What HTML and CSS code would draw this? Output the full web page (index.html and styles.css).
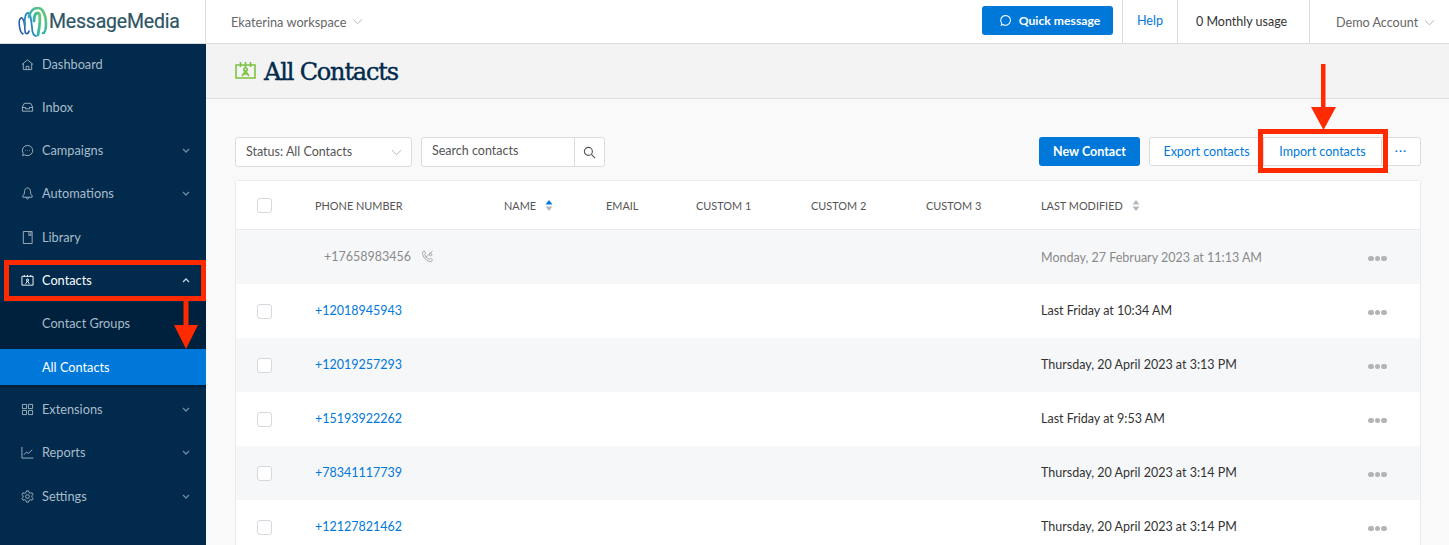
FILE: index.html
```html
<!DOCTYPE html>
<html lang="en">
<head>
<meta charset="utf-8">
<title>All Contacts</title>
<link rel="stylesheet" href="styles.css">
</head>
<body>
<div class="app">
  <aside class="side">
    <div class="logo">
      <svg class="logo-mark" viewBox="0 0 30 30" width="30" height="30" fill="none" stroke-linecap="round">
        <defs>
          <linearGradient id="arch" x1="1" y1="0" x2="0" y2="1">
            <stop offset="0" stop-color="#6cc86e"/>
            <stop offset=".55" stop-color="#37b8a6"/>
            <stop offset="1" stop-color="#2fa6cf"/>
          </linearGradient>
        </defs>
        <path d="M5 27C1 25 0 12 3 11c3-1 4 9 4 13 0 3 3 4 4 0" stroke="#2a5fa8" stroke-width="1.600"/>
        <path d="M7 18C6 10 8 6 10 6c3 0 3 8 4 14 0 6 2 9 4 9" stroke="#2b87c4" stroke-width="1.800"/>
        <path d="M11 10C12 4 16 1 20 1c5 0 8 8 8 15 0 6-1 10-3 10" stroke="url(#arch)" stroke-width="2.600"/>
        <path d="M16 14c0-6 2-8 4-8 3 0 2 12 0 22" stroke="url(#arch)" stroke-width="2.800"/>
      </svg>
      <span class="logo-text">MessageMedia</span>
    </div>
    <nav class="nav">
      <a class="item"><svg class="ic" viewBox="0 0 14 14"><path d="M1 7l6-5 6 5M2.500 6v6.500h9V6M5.500 12.500V9h3v3.500"/></svg><span>Dashboard</span></a>
      <a class="item"><svg class="ic" viewBox="0 0 14 14"><path d="M3.500 2.500h7l2 4v4.500h-11V6.500zM1.500 7h3.500v1.500h4V7h3.500"/></svg><span>Inbox</span></a>
      <a class="item"><svg class="ic" viewBox="0 0 14 14"><path d="M7 1.500a5.700 5.500 0 1 1-3 10.200L1.800 12.500l.6-2.400A5.600 5.500 0 0 1 7 1.500z"/><path d="M4.500 7h.6M6.700 7h.6M8.900 7h.6"/></svg><span>Campaigns</span><svg class="chev" viewBox="0 0 8 5"><path d="M1 1l3 3 3-3"/></svg></a>
      <a class="item"><svg class="ic" viewBox="0 0 14 14"><path d="M7 1c-2.200 0-3.200 2-3.200 4.200 0 2-.8 3.300-1.800 4.300v1.500h10V9.500c-1-1-1.800-2.300-1.800-4.300C10.200 3 9.200 1 7 1zM5.500 11c0 2.500 3 2.500 3 0"/></svg><span>Automations</span><svg class="chev" viewBox="0 0 8 5"><path d="M1 1l3 3 3-3"/></svg></a>
      <a class="item step"><svg class="ic" viewBox="0 0 14 14"><path d="M2.500 .5h9.500v13H2.500zM8.500 .5v4.500l1.200-.8 1 .8V.5"/></svg><span>Library</span></a>
      <a class="item active"><svg class="ic" viewBox="0 0 14 14"><path d="M1 2.500h12v9.500H1z"/><path d="M3.500 1v2M7 1v2M10.500 1v2"/><circle cx="7" cy="6.500" r="1.200"/><path d="M5 10.500L7 7.500l2 3"/></svg><span>Contacts</span><svg class="chev" viewBox="0 0 8 5"><path d="M1 4l3-3 3 3"/></svg></a>
      <div class="subs">
        <a class="sub">Contact Groups</a>
        <a class="sub current">All Contacts</a>
      </div>
      <a class="item"><svg class="ic" viewBox="0 0 14 14"><path d="M1.500 1.500h4.500v4.500H1.500zM8 1.500h4.500v4.500H8zM1.500 8h4.500v4.500H1.500zM8 8h4.500v4.500H8z"/></svg><span>Extensions</span><svg class="chev" viewBox="0 0 8 5"><path d="M1 1l3 3 3-3"/></svg></a>
      <a class="item"><svg class="ic" viewBox="0 0 14 14"><path d="M1 1v12h12.500M3 9.500l3-3 2 1.500 4-4"/></svg><span>Reports</span><svg class="chev" viewBox="0 0 8 5"><path d="M1 1l3 3 3-3"/></svg></a>
      <a class="item step"><svg class="ic" viewBox="0 0 14 14"><path d="M5.800 1h2.400l.4 1.800 1.500.8 1.800-.6 1.100 2-1.300 1.300v1.400l1.300 1.300-1.100 2-1.800-.6-1.500.8-.4 1.800H5.800l-.4-1.800-1.500-.8-1.800.6-1.100-2 1.300-1.300V6.300L1 5l1.100-2 1.800.6 1.500-.8z"/><circle cx="7" cy="7" r="2"/></svg><span>Settings</span><svg class="chev" viewBox="0 0 8 5"><path d="M1 1l3 3 3-3"/></svg></a>
    </nav>
  </aside>
  <div class="main">
    <header class="top">
      <div class="workspace">Ekaterina workspace<svg class="caret" viewBox="0 0 12 7"><path d="M1 1l5 5 5-5"/></svg></div>
      <button class="btn primary quick"><svg class="bubble" viewBox="0 0 14 14"><path d="M7 1.500a5.500 5.300 0 1 1-3 9.800l-1.500.7.400-2A5.400 5.300 0 0 1 7 1.500z"/></svg>Quick message</button>
      <a class="cell help">Help</a>
      <div class="cell usage">0 Monthly usage</div>
      <div class="cell account">Demo Account<svg class="caret" viewBox="0 0 12 7"><path d="M1 1l5 5 5-5"/></svg></div>
    </header>
    <div class="title-bar">
      <svg class="title-ic" viewBox="0 0 21 17" width="21" height="17"><path d="M1 3h19v13H1z"/><path d="M5.500 0v5M10.500 0v5M15.500 0v5"/><circle cx="10.500" cy="7.500" r="1.700"/><path d="M7 14L10.500 9.200 14 14M8.500 12h4"/></svg>
      <h1>All Contacts</h1>
    </div>
    <section class="content">
      <div class="toolbar">
        <div class="select"><span class="up-1">Status: All Contacts</span><svg class="caret" viewBox="0 0 12 7"><path d="M1 1l5 5 5-5"/></svg></div>
        <div class="search"><span class="search-text">Search contacts</span><span class="search-btn"><svg viewBox="0 0 14 14" width="13" height="13"><circle cx="5.800" cy="5.800" r="4.300"/><path d="M9 9l4 4"/></svg></span></div>
        <div class="spacer"></div>
        <button class="btn primary new">New Contact</button>
        <div class="group">
          <button class="g export">Export contacts</button>
          <button class="g import">Import contacts</button>
          <button class="g more">···</button>
        </div>
      </div>
      <div class="table">
        <div class="row head">
          <span class="check"></span>
          <span>PHONE NUMBER</span>
          <span>NAME<svg class="sort" viewBox="0 0 8 11"><path class="up" d="M4 0l3.500 4.500h-7z"/><path d="M4 11L.5 6.500h7z"/></svg></span>
          <span>EMAIL</span>
          <span>CUSTOM 1</span>
          <span>CUSTOM 2</span>
          <span>CUSTOM 3</span>
          <span>LAST MODIFIED<svg class="sort" viewBox="0 0 8 11"><path d="M4 0l3.500 4.500h-7z"/><path d="M4 11L.5 6.500h7z"/></svg></span>
          <span></span>
        </div>
        <div class="row muted">
          <span></span>
          <span class="phone-off">+17658983456<svg class="nophone" viewBox="0 0 14 14"><path d="M1.500 2.500L3.500 1l1.500 2.500-1 1.200c.8 2.500 2.500 4.300 5 5.300l1.200-1 2.300 1.600-1.500 2C6 12.500 2 8 1.500 2.500z"/><path d="M12.500 1L5 8"/><circle cx="10.500" cy="5" r="1.300"/></svg></span>
          <span></span><span></span><span></span><span></span><span></span>
          <span class="date">Monday, 27 February 2023 at 11:13 AM</span>
          <span class="dots"><i></i><i></i><i></i></span>
        </div>
        <div class="row">
          <span class="check"></span><a class="phone">+12018945943</a>
          <span></span><span></span><span></span><span></span><span></span>
          <span class="date">Last Friday at 10:34 AM</span>
          <span class="dots"><i></i><i></i><i></i></span>
        </div>
        <div class="row">
          <span class="check"></span><a class="phone">+12019257293</a>
          <span></span><span></span><span></span><span></span><span></span>
          <span class="date">Thursday, 20 April 2023 at 3:13 PM</span>
          <span class="dots"><i></i><i></i><i></i></span>
        </div>
        <div class="row">
          <span class="check"></span><a class="phone">+15193922262</a>
          <span></span><span></span><span></span><span></span><span></span>
          <span class="date">Last Friday at 9:53 AM</span>
          <span class="dots"><i></i><i></i><i></i></span>
        </div>
        <div class="row">
          <span class="check"></span><a class="phone">+78341117739</a>
          <span></span><span></span><span></span><span></span><span></span>
          <span class="date">Thursday, 20 April 2023 at 3:14 PM</span>
          <span class="dots"><i></i><i></i><i></i></span>
        </div>
        <div class="row">
          <span class="check"></span><a class="phone">+12127821462</a>
          <span></span><span></span><span></span><span></span><span></span>
          <span class="date">Thursday, 20 April 2023 at 3:14 PM</span>
          <span class="dots"><i></i><i></i><i></i></span>
        </div>
      </div>
    </section>
  </div>
  <div class="mark box-contacts"></div>
  <div class="mark box-import"></div>
  <svg class="arrow arrow-down-side" viewBox="0 0 24 48" width="24" height="48"><path d="M9.500 0h5v24H24L12 48 0 24h9.500z"/></svg>
  <svg class="arrow arrow-down-top" viewBox="0 0 25 66" width="25" height="66"><path d="M10 0h4.500v43H25L12.500 66 0 43h10z"/></svg>
</div>
</body>
</html>
```
FILE: styles.css
```css
* { box-sizing: border-box; }
html, body { margin: 0; height: 100%; overflow: hidden; }
body { font-family: Lato, "Liberation Sans", sans-serif; font-size: 12.500px; color: #333; background: #f9f9f9; }
svg { display: block; }
button { font-family: inherit; cursor: pointer; }
.app { position: relative; display: flex; width: 1449px; height: 545px; overflow: hidden; }

/* sidebar */
.side { flex: 0 0 206px; background: #012a4c; display: flex; flex-direction: column; }
.logo { height: 44px; flex: none; background: #fff; border-right: 1px solid #dcdcdc; border-bottom: 1px solid #dcdcdc; display: flex; align-items: center; padding-left: 18px; gap: 1px; }
.logo-text { font-family: Roboto, "Noto Sans", sans-serif; font-size: 19.500px; font-weight: 400; letter-spacing: -.2px; color: #2e5566; -webkit-text-stroke: .2px #2e5566; }
.nav { display: flex; flex-direction: column; margin-top: -1.500px; }
.item, .sub { height: 43px; flex: none; display: flex; align-items: center; color: #a9bccb; font-size: 12.750px; }
.item { padding: 0 16px 0 21px; }
.item.step { margin-top: 1px; }
.item span { flex: 1; margin-left: 8px; }
.item.active { color: #fff; }
.ic { width: 13px; height: 13px; flex: none; fill: none; stroke: #a2b4c2; stroke-width: 1; }
.active .ic { stroke: #fff; }
.chev { width: 8px; height: 5px; fill: none; stroke: #6f8ba0; stroke-width: 1.300; }
.active .chev { stroke: #c7d3dc; }
.subs { height: 86px; flex: none; background: #00213d; display: flex; flex-direction: column; }
.sub { padding-left: 42px; }
.sub.current { height: 36px; margin-top: 4.500px; padding-bottom: 1px; background: #0078d9; color: #fff; }

/* main column */
.main { flex: 1; min-width: 0; display: flex; flex-direction: column; }
.top { height: 44px; flex: none; background: #fff; border-bottom: 1px solid #dcdcdc; display: flex; align-items: stretch; }
.workspace { flex: 1; display: flex; align-items: center; padding-left: 25px; color: #666; font-size: 12.750px; gap: 6px; }
.caret { width: 11px; height: 7px; fill: none; stroke: #aab0b5; stroke-width: 1; }
.btn { border: 0; border-radius: 3px; color: #fff; font-size: 12.500px; font-weight: 700; }
.primary { background: #0078d9; }
.quick { width: 131px; height: 29px; margin-top: 6px; display: flex; align-items: center; justify-content: center; gap: 7px; padding-right: 2px; font-size: 12.200px; }
.bubble { width: 13px; height: 13px; fill: none; stroke: #fff; stroke-width: 1.100; }
.cell { display: flex; align-items: center; border-left: 1px solid #dcdcdc; font-size: 12.600px; }
.help { margin-left: 9px; width: 55px; justify-content: center; color: #0078d9; padding-bottom: 3px; }
.usage { width: 132px; padding-left: 18px; color: #333; padding-bottom: 1px; font-size: 12.500px; }
.account { width: 140px; padding-left: 26px; color: #666; gap: 6px; padding-top: 1px; }

.title-bar { height: 55px; flex: none; background: #f3f3f3; border-bottom: 1px solid #dcdcdc; display: flex; align-items: center; padding-left: 29px; gap: 8px; }
.title-ic { fill: none; stroke: #7ec242; stroke-width: 1.600; margin-top: -2px; }
h1 { margin: 2px 0 0; font-family: "DejaVu Serif", serif; font-size: 24px; font-weight: 400; letter-spacing: -1.170px; color: #012a4c; -webkit-text-stroke: .4px #012a4c; }

.content { flex: 1; padding: 38px 28px 0 29px; min-height: 0; }
.toolbar { display: flex; align-items: stretch; height: 30px; }
.select { width: 177px; background: #fff; border: 1px solid #dcdcdc; border-radius: 3px; display: flex; align-items: center; justify-content: space-between; padding: 0 9px 0 10px; color: #555; }
.up-1 { padding-bottom: 2px; }
.search { width: 184px; margin-left: 9px; background: #fff; border: 1px solid #dcdcdc; border-radius: 3px; display: flex; align-items: stretch; }
.search-text { flex: 1; padding: 5px 0 0 10px; color: #555; }
.search-btn { width: 30px; border-left: 1px solid #dcdcdc; display: flex; align-items: center; justify-content: center; }
.search-btn svg { fill: none; stroke: #555; stroke-width: 1.200; }
.spacer { flex: 1; }
.new { width: 101px; height: 29px; }
.group { margin-left: 9px; display: flex; background: #fff; border: 1px solid #dcdcdc; border-radius: 3px; height: 29px; }
.g { background: none; border: 0; color: #0078d9; font-size: 12.500px; padding: 0; }
.export { width: 113px; }
.import { width: 119px; border-left: 1px solid #dcdcdc; border-right: 1px solid #dcdcdc; }
.more { width: 38px; font-size: 12px; letter-spacing: 1px; padding-bottom: 2px; }

.table { margin-top: 13px; background: #fff; border: 1px solid #e8ebf0; border-radius: 3px 3px 0 0; }
.row { display: grid; grid-template-columns: 79px 189px 102px 90px 115px 115px 115px 1fr 52px; align-items: center; height: 54px; background: #fff; color: #333; }
.row.head { height: 49px; font-size: 10.900px; color: #555; border-bottom: 1px solid #e8ebf0; }
.row.head span { display: flex; align-items: center; gap: 9px; }
.row:nth-child(even) { background: #f6f7f9; }
.check { width: 15px; height: 15px; margin-left: 21px; background: #fff; border: 1px solid #d5d8dc; border-radius: 3px; }
.phone { color: #0078d9; margin-top: -2px; }
.phone-off { display: flex; align-items: center; gap: 10px; padding-left: 9px; color: #8a8a8a; margin-top: -2px; }
.nophone { width: 13px; height: 13px; fill: none; stroke: #9a9a9a; stroke-width: .9; }
.date { white-space: nowrap; margin-top: -2px; }
.muted .date { color: #8a8a8a; margin-top: 0; }
.sort { width: 8px; height: 11px; fill: #b3b8bd; }
.sort .up { fill: #0078d9; }
.head span:nth-child(8) .sort .up { fill: #b3b8bd; }
.dots { display: flex; gap: 1px; padding-top: 3px; }
.dots i { width: 5.500px; height: 5.500px; border-radius: 50%; background: #b4b4b4; }

/* red annotations laid over the screenshot */
.mark { position: absolute; border: 5px solid #ff2a00; }
.box-contacts { left: 4px; top: 260px; width: 202px; height: 41px; }
.box-import { left: 1258px; top: 129px; width: 130px; height: 44px; }
.arrow { position: absolute; fill: #ff2a00; }
.arrow-down-side { left: 174px; top: 301px; }
.arrow-down-top { left: 1311px; top: 64px; }
```
